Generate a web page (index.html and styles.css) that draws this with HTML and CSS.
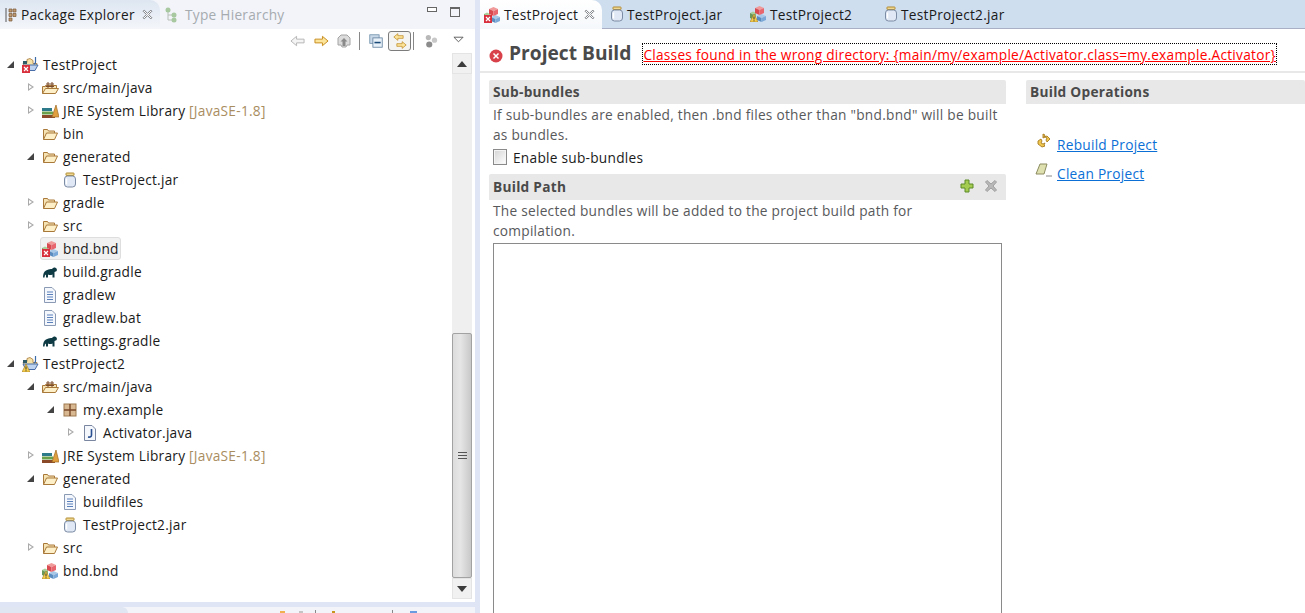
FILE: index.html
```html
<!DOCTYPE html>
<html lang="en">
<head>
<meta charset="utf-8">
<title>Project Build</title>
<link rel="stylesheet" href="styles.css">
</head>
<body>
<svg class="defs" aria-hidden="true">
<defs>
<symbol id="folder" viewBox="0 0 16 16">
<path d="M1.500 13.500V3.500h4l1 1.500h6v2.500" fill="#f6e3b4" stroke="#a9793a"/>
<path d="M1.500 13.500l3-6.500h11l-3 6.500z" fill="#fdf0c8" stroke="#a9793a" stroke-linejoin="round"/>
</symbol>
<symbol id="srcfolder" viewBox="0 0 18 16">
<path d="M1.500 13.500V6.500h3v-1h11v7" fill="#f6e3b4" stroke="#a9793a"/>
<path d="M1.500 13.500l3-5h13l-3 5z" fill="#fdf0c8" stroke="#a9793a" stroke-linejoin="round"/>
<path d="M7 2v6M11 2v6M5 4h8M5 6.500h8" stroke="#7a4a2a" fill="none"/>
</symbol>
<symbol id="project" viewBox="0 0 18 18">
<path d="M2 7.500l4-1v-3l3-1 3 2v3h4l-2 6H4z" fill="#f4e2a8" stroke="#a9793a" stroke-width=".8"/>
<path d="M2 5h4v3H2z" fill="#2e5b66"/>
<path d="M14.500 1v5q0 2-2 2" fill="none" stroke="#3a6aa8" stroke-width="1.200"/>
<path d="M2 9h15l-3 5.500H5z" fill="#bcd2ee" stroke="#4a6fa8"/>
</symbol>
<symbol id="errbadge" viewBox="0 0 8 8">
<rect width="8" height="8" fill="#d8303c"/>
<path d="M2 2l4 4M6 2L2 6" stroke="#fff" stroke-width="1.200"/>
</symbol>
<symbol id="warnbadge" viewBox="0 0 8 8">
<path d="M4 0l4 8H0z" fill="#f8cf4a" stroke="#a07a20" stroke-width=".6"/>
<path d="M4 2.500v3M4 6.300v1" stroke="#333"/>
</symbol>
<symbol id="jre" viewBox="0 0 18 16">
<path d="M1 5h10v3H1z" fill="#2d7a8a"/>
<path d="M1 8.500h11v3H1z" fill="#6aa04a"/>
<path d="M1 12h13v3H1z" fill="#8a4a2a"/>
<path d="M11 14l4-12 3 12z" fill="#e0a040" stroke="#a06a20" stroke-width=".7"/>
</symbol>
<symbol id="jar" viewBox="0 0 14 16">
<rect x="3" y="1" width="8" height="2.500" rx=".5" fill="#f0d890" stroke="#b08a30"/>
<rect x="1.500" y="4" width="11" height="11" rx="3" fill="#dfe8f4" stroke="#7c8ca4"/>
<path d="M3.500 6.500v6" stroke="#fff" stroke-width="1.500"/>
</symbol>
<symbol id="bnd" viewBox="0 0 18 18">
<path d="M1 8l3-1.500L7 8 4 9.500z" fill="#a8d098"/>
<path d="M1 8v5l3 1.500v-5z" fill="#6a9a5a"/>
<path d="M7 8v5l-3 1.500v-5z" fill="#88b878"/>
<path d="M8 11l4.500-2 4.500 2-4.500 2z" fill="#a8c8e8"/>
<path d="M8 11v4l4.500 2v-4z" fill="#5a8cc0"/>
<path d="M17 11v4l-4.500 2v-4z" fill="#7aa8d8"/>
<path d="M6 3l4.500-2L15 3l-4.500 2z" fill="#f09a9a"/>
<path d="M6 3v5l4.500 2V5z" fill="#d84a50"/>
<path d="M15 3v5l-4.500 2V5z" fill="#e8666e"/>
</symbol>
<symbol id="gradle" viewBox="0 0 14 12">
<path d="M0 11.500Q0 6 3 4.500 6 2.500 9 3q1-2 3-1.500 2 .5 2 2.500 0 1.500-2.500 2v5.500H9.500V8.500Q7 9.500 5 8.500v3H3V8.500Q1.500 9 1.500 11.500z" fill="#0e3a44"/>
</symbol>
<symbol id="file" viewBox="0 0 12 16">
<path d="M.5.5h7.500l3.500 3.500v11.500H.5z" fill="#f4f7fc" stroke="#8a9ab4"/>
<path d="M3 5h6M3 7.500h6M3 10h6M3 12.500h6" stroke="#5a80bc"/>
</symbol>
<symbol id="package" viewBox="0 0 14 14">
<rect x="1" y="1" width="12" height="12" fill="#d8b890" stroke="#a07a50"/>
<path d="M7 1v12M1 7h12" stroke="#7a4a2a" stroke-width="1.400"/>
</symbol>
<symbol id="java" viewBox="0 0 12 16">
<path d="M.5.5h7.500l3.500 3.500v11.500H.5z" fill="#f4f7fc" stroke="#7a86a0"/>
<path d="M7.500 4v6q0 2.500-3.500 2" fill="none" stroke="#2a4f90" stroke-width="1.600"/>
</symbol>
<symbol id="close" viewBox="0 0 10 10">
<path d="M1 2l1-1 3 3 3-3 1 1-3 3 3 3-1 1-3-3-3 3-1-1 3-3z" fill="#fff" stroke="#7b7f85" stroke-width=".9"/>
</symbol>
<symbol id="hier" viewBox="0 0 14 16">
<path d="M4 3v10M4 8h5M4 13h5" stroke="#b8c0b8" fill="none"/>
<circle cx="4" cy="3" r="2.500" fill="#a8c8a0"/>
<circle cx="10" cy="8" r="2.500" fill="#a8c8a0"/>
<circle cx="10" cy="13" r="2.500" fill="#a8c8a0"/>
</symbol>
<symbol id="pkgview" viewBox="0 0 14 16">
<path d="M2 1v14" stroke="#555"/>
<path d="M5 2h3v3H5zM9 2h3v3H9zM5 6.500h3v3H5zM9 6.500h3v3H9zM5 11h3v3H5z" fill="#c09a70" stroke="#7a5a3a" stroke-width=".7"/>
</symbol>
<symbol id="arrow" viewBox="0 0 16 12">
<path d="M1 4h8V1l6 5-6 5V8H1z" stroke-linejoin="round"/>
</symbol>
</defs>
</svg>

<div class="workbench">
  <section class="left-pane">
    <header class="view-tabs">
      <div class="view-tab active">
        <svg class="ic14"><use href="#pkgview"/></svg>
        <span>Package Explorer</span>
        <svg class="x"><use href="#close"/></svg>
      </div>
      <div class="view-tab second">
        <svg class="ic14"><use href="#hier"/></svg>
        <span class="dim">Type Hierarchy</span>
      </div>
      <div class="win-ctl">
        <span class="min"></span>
        <span class="max"></span>
      </div>
    </header>
    <div class="toolbar">
      <svg class="tb-arrow back"><use href="#arrow"/></svg>
      <svg class="tb-arrow fwd"><use href="#arrow"/></svg>
      <svg class="tb-icon home" viewBox="0 0 16 16"><path d="M2 12V5l3-3h6l3 3v7h-3l-1 2H6l-1-2z" fill="#dcdcdc" stroke="#a4a4a4"/><path d="M8 5l3.500 3.500H9.500V13h-3V8.500h-2z" fill="#8a8a8a"/></svg>
      <i class="sep"></i>
      <svg class="tb-icon collapse" viewBox="0 0 18 18"><rect x="1" y="1" width="12" height="11" fill="#c8d8e8" stroke="#6a8aa8"/><rect x="5" y="5" width="12" height="12" fill="#e8f0f8" stroke="#5a7a98"/><path d="M7 11h8" stroke="#1a4a78" stroke-width="2"/></svg>
      <span class="toggle">
        <svg class="link-up"><use href="#arrow"/></svg>
        <svg class="link-dn"><use href="#arrow"/></svg>
      </span>
      <i class="sep"></i>
      <svg class="tb-icon focus" viewBox="0 0 16 16"><circle cx="5" cy="4" r="3" fill="#b8b8b8"/><circle cx="12" cy="7" r="3" fill="#c8c8c8"/><circle cx="6" cy="12" r="3.500" fill="#8c8c8c"/></svg>
      <svg class="tb-menu" viewBox="0 0 12 7"><path d="M1 1h10L6 6z" fill="#fff" stroke="#555"/></svg>
    </div>
    <div class="tree-wrap">
      <ul class="tree">
        <li class="row l0"><i class="tw open"></i><span class="ico"><svg class="i18"><use href="#project"/></svg><svg class="bd"><use href="#errbadge"/></svg></span><span>TestProject</span></li>
        <li class="row l1"><i class="tw shut"></i><span class="ico"><svg class="i18"><use href="#srcfolder"/></svg></span><span>src/main/java</span></li>
        <li class="row l1"><i class="tw shut"></i><span class="ico"><svg class="i18"><use href="#jre"/></svg></span><span>JRE System Library <em>[JavaSE-1.8]</em></span></li>
        <li class="row l1"><i class="tw"></i><span class="ico"><svg class="i16"><use href="#folder"/></svg></span><span>bin</span></li>
        <li class="row l1"><i class="tw open"></i><span class="ico"><svg class="i16"><use href="#folder"/></svg></span><span>generated</span></li>
        <li class="row l2"><i class="tw"></i><span class="ico"><svg class="i16"><use href="#jar"/></svg></span><span>TestProject.jar</span></li>
        <li class="row l1"><i class="tw shut"></i><span class="ico"><svg class="i16"><use href="#folder"/></svg></span><span>gradle</span></li>
        <li class="row l1"><i class="tw shut"></i><span class="ico"><svg class="i16"><use href="#folder"/></svg></span><span>src</span></li>
        <li class="row l1"><i class="tw"></i><span class="ico"><svg class="i18"><use href="#bnd"/></svg><svg class="bd"><use href="#errbadge"/></svg></span><span class="sel">bnd.bnd</span></li>
        <li class="row l1"><i class="tw"></i><span class="ico"><svg class="gr"><use href="#gradle"/></svg></span><span>build.gradle</span></li>
        <li class="row l1"><i class="tw"></i><span class="ico"><svg class="i16"><use href="#file"/></svg></span><span>gradlew</span></li>
        <li class="row l1"><i class="tw"></i><span class="ico"><svg class="i16"><use href="#file"/></svg></span><span>gradlew.bat</span></li>
        <li class="row l1"><i class="tw"></i><span class="ico"><svg class="gr"><use href="#gradle"/></svg></span><span>settings.gradle</span></li>
        <li class="row l0"><i class="tw open"></i><span class="ico"><svg class="i18"><use href="#project"/></svg><svg class="bd"><use href="#warnbadge"/></svg></span><span>TestProject2</span></li>
        <li class="row l1"><i class="tw open"></i><span class="ico"><svg class="i18"><use href="#srcfolder"/></svg></span><span>src/main/java</span></li>
        <li class="row l2"><i class="tw open"></i><span class="ico"><svg class="i14"><use href="#package"/></svg></span><span>my.example</span></li>
        <li class="row l3"><i class="tw shut"></i><span class="ico"><svg class="i16"><use href="#java"/></svg></span><span>Activator.java</span></li>
        <li class="row l1"><i class="tw shut"></i><span class="ico"><svg class="i18"><use href="#jre"/></svg></span><span>JRE System Library <em>[JavaSE-1.8]</em></span></li>
        <li class="row l1"><i class="tw open"></i><span class="ico"><svg class="i16"><use href="#folder"/></svg></span><span>generated</span></li>
        <li class="row l2"><i class="tw"></i><span class="ico"><svg class="i16"><use href="#file"/></svg></span><span>buildfiles</span></li>
        <li class="row l2"><i class="tw"></i><span class="ico"><svg class="i16"><use href="#jar"/></svg></span><span>TestProject2.jar</span></li>
        <li class="row l1"><i class="tw shut"></i><span class="ico"><svg class="i16"><use href="#folder"/></svg></span><span>src</span></li>
        <li class="row l1"><i class="tw"></i><span class="ico"><svg class="i18"><use href="#bnd"/></svg><svg class="bd"><use href="#warnbadge"/></svg></span><span>bnd.bnd</span></li>
      </ul>
      <div class="scrollbar">
        <span class="sb-btn"><i class="up"></i></span>
        <span class="sb-space"></span>
        <span class="sb-thumb"><i></i></span>
        <span class="sb-btn"><i class="down"></i></span>
      </div>
    </div>
    <div class="gutter-h"></div>
    <div class="lower-tabs">
      <span class="lower-tab"></span>
      <i class="bit orange"></i>
      <i class="bit gray"></i>
      <i class="bit line"></i>
      <i class="bit orange2"></i>
      <i class="bit line2"></i>
      <i class="bit blue"></i>
    </div>
  </section>

  <main class="editor">
    <nav class="ed-tabs">
      <div class="ed-tab active">
        <span class="ico"><svg class="i18"><use href="#bnd"/></svg><svg class="bd"><use href="#errbadge"/></svg></span>
        <span>TestProject</span>
        <svg class="x"><use href="#close"/></svg>
      </div>
      <div class="ed-tab t2"><svg class="i16"><use href="#jar"/></svg><span>TestProject.jar</span></div>
      <div class="ed-tab t3"><span class="ico"><svg class="i18"><use href="#bnd"/></svg><svg class="bd"><use href="#warnbadge"/></svg></span><span>TestProject2</span></div>
      <div class="ed-tab t4"><svg class="i16"><use href="#jar"/></svg><span>TestProject2.jar</span></div>
    </nav>
    <div class="form-head">
      <svg class="err" viewBox="0 0 14 14"><circle cx="7" cy="7" r="6.500" fill="#d8404a"/><path d="M4.500 4.500l5 5M9.500 4.500l-5 5" stroke="#fff" stroke-width="1.500"/></svg>
      <h1>Project Build</h1>
      <a class="err-link" href="#">Classes found in the wrong directory: {main/my/example/Activator.class=my.example.Activator}</a>
    </div>
    <div class="form-body">
      <div class="col-main">
        <h2 class="sec-head s1">Sub-bundles</h2>
        <p class="desc">If sub-bundles are enabled, then .bnd files other than "bnd.bnd" will be built as bundles.</p>
        <label class="check"><span class="box"></span><span class="check-text">Enable sub-bundles</span></label>
        <h2 class="sec-head s2">Build Path
          <span class="sec-tools">
            <svg class="i14" viewBox="0 0 14 14"><path d="M5 1h4v4h4v4H9v4H5V9H1V5h4z" fill="#a4cc50" stroke="#5c8a28"/></svg>
            <svg class="i14" viewBox="0 0 14 14"><path d="M1.500 3L3 1.500 7 5l4-3.500L12.500 3 9 7l3.500 4-1.500 1.500L7 9l-4 3.500L1.500 11 5 7z" fill="#b8b8b8" stroke="#a0a0a0"/></svg>
          </span>
        </h2>
        <p class="desc">The selected bundles will be added to the project build path for compilation.</p>
        <div class="list-box"></div>
      </div>
      <aside class="col-side">
        <h2 class="sec-head s1">Build Operations</h2>
        <div class="ops">
          <div class="op">
            <svg class="op-ic" viewBox="0 0 16 16"><path d="M7 1l2 1-1 2 3-1 3 3-3 3-1-2 1-2-2-1-2 1zM2 8l3-2 1 2-1 2 2 1 2-1-1 2 1 1-3 1-4-3z" fill="#f0c850" stroke="#a87c20" stroke-width=".9"/></svg>
            <a href="#">Rebuild Project</a>
          </div>
          <div class="op">
            <svg class="op-ic" viewBox="0 0 18 16"><path d="M1 12L5 2h7l-3 10z" fill="#dfe0b0" stroke="#8c8c60"/><path d="M11 14h6" stroke="#888"/></svg>
            <a href="#">Clean Project</a>
          </div>
        </div>
      </aside>
    </div>
  </main>
</div>
</body>
</html>
```

FILE: styles.css
```css
* { box-sizing: border-box; }
html, body { margin: 0; height: 613px; overflow: hidden; }
body {
  background: #fff;
  color: #1a1a1a;
  font-family: "Open Sans", "Noto Sans", sans-serif;
  font-size: 13.7px;
  letter-spacing: .26px;
}
.defs { width: 0; height: 0; display: block; }
.workbench { display: flex; height: 613px; }

/* left pane */
.left-pane { width: 480px; flex: none; display: flex; flex-direction: column; border-right: 5px solid #dfe5f4; }
.view-tabs { height: 29px; display: flex; align-items: center; background: #f2f4fa; flex: none; }
.view-tab { height: 29px; display: flex; align-items: center; gap: 3px; padding-left: 4px; }
.view-tab.active { width: 160px; background: linear-gradient(#dde6f1, #f4f6fa); border-top-right-radius: 10px; }
.view-tab.second { gap: 7px; }
.view-tab .x { margin-left: 4px; }
.x { width: 11px; height: 11px; flex: none; }
.ic14 { width: 14px; height: 16px; flex: none; }
.dim { color: #a6abb0; }
.win-ctl { margin-left: auto; display: flex; align-items: center; gap: 13px; padding-right: 15px; }
.min { width: 10px; height: 5px; border: 1px solid #666; background: #fff; margin-top: -11px; }
.max { width: 10px; height: 10px; border: 1px solid #666; border-top-width: 2px; margin-top: -5px; }

.toolbar { height: 24px; flex: none; display: flex; align-items: center; padding-left: 290px; }
.toolbar svg { flex: none; }
.tb-arrow { width: 15px; height: 12px; }
.back { transform: scaleX(-1); fill: #f4f4f4; stroke: #b4b4b4; }
.fwd { margin-left: 9px; fill: #fce59a; stroke: #c58a1c; }
.tb-icon { width: 14px; height: 14px; margin-left: 6px; }
.home { width: 16px; height: 16px; margin-left: 7px; }
.sep { width: 1px; height: 18px; background: #888; margin-left: 7px; flex: none; }
.collapse { margin-left: 9px; width: 14px; height: 14px; }
.toggle { width: 23px; height: 20px; margin-left: 5px; border: 1px solid #7c7c7c; border-radius: 3px; background: #f4f4f2; display: flex; flex-direction: column; align-items: center; justify-content: center; flex: none; }
.toggle svg { width: 15px; height: 8px; fill: #fce59a; stroke: #b98014; }
.link-up { transform: scaleX(-1); margin-left: -2px; }
.link-dn { margin-left: 3px; }
.sep + .focus { margin-left: 10px; }
.toggle + .sep { margin-left: 2px; }
.tb-menu { width: 11px; height: 7px; margin-left: 15px; margin-top: -4px; }

.tree-wrap { height: 549px; flex: none; display: flex; }
.tree { list-style: none; margin: 0; padding: 0; flex: 1; min-width: 0; }
.row { height: 23px; display: flex; align-items: center; white-space: nowrap; }
.row em { font-style: normal; color: #a98d5f; }
.l0 { padding-left: 7px; }
.l1 { padding-left: 27px; }
.l2 { padding-left: 47px; }
.l3 { padding-left: 67px; }
.tw { width: 9px; height: 9px; flex: none; position: relative; }
.tw.open::before { content: ""; display: block; width: 0; height: 0; border-bottom: 7px solid #444; border-left: 7px solid transparent; margin-top: 1px; }
.tw.shut::before { content: ""; display: block; width: 0; height: 0; border-top: 4px solid transparent; border-bottom: 4px solid transparent; border-left: 6px solid #aaa; margin-left: 1px; }
.tw.shut::after { content: ""; position: absolute; left: 2px; top: 2px; border-top: 2.500px solid transparent; border-bottom: 2.500px solid transparent; border-left: 3.500px solid #fff; }
.ico { width: 18px; height: 18px; margin-left: 5px; margin-right: 4px; position: relative; display: flex; align-items: center; justify-content: center; flex: none; }
.i18 { width: 18px; height: 18px; flex: none; }
.i16 { width: 16px; height: 16px; flex: none; }
.i14 { width: 14px; height: 14px; flex: none; }
.gr { width: 14px; height: 12px; flex: none; }
.bd { position: absolute; left: 1px; bottom: 1px; width: 8px; height: 8px; }
.sel { background: #f1f1f1; border: 1px solid #dedede; border-radius: 3px; margin-left: -23px; padding-left: 22px; padding-right: 1px; line-height: 21px; }
.scrollbar { width: 20px; margin-right: 3px; background: #efefef; display: flex; flex-direction: column; flex: none; height: 546px; }
.sb-btn { height: 21px; flex: none; display: flex; align-items: center; justify-content: center; background: #f1f1f1; border: 1px solid #e4e4e4; }
.sb-btn i { width: 0; height: 0; border-left: 5px solid transparent; border-right: 5px solid transparent; }
.up { border-bottom: 6px solid #3c3c3c; }
.down { border-top: 6px solid #3c3c3c; }
.sb-space { flex: 1; }
.sb-thumb { height: 245px; flex: none; border: 1px solid #a2a2a2; border-radius: 2px; background: linear-gradient(90deg, #dcdcdc, #e6e6e6 40%, #c8c8c8); display: flex; align-items: center; justify-content: center; }
.sb-thumb i { width: 9px; height: 7px; border-top: 1px solid #555; border-bottom: 1px solid #555; background: linear-gradient(#0000 2px, #555 2px, #555 3px, #0000 3px); }
.gutter-h { height: 5px; background: #dfe5f4; flex: none; }
.lower-tabs { flex: 1; background: #f2f4fa; min-height: 0; display: flex; align-items: flex-end; }
.lower-tab { width: 128px; height: 6px; background: #e0e7f2; border-top-right-radius: 8px; align-self: flex-start; }
.bit { height: 2px; flex: none; }
.orange { width: 5px; margin-left: 152px; background: #f0b050; }
.gray { width: 4px; margin-left: 14px; background: #c4c4c4; }
.line { width: 1px; height: 3px; margin-left: 12px; background: #888; }
.orange2 { width: 3px; margin-left: 16px; background: #c8961c; }
.line2 { width: 1px; height: 3px; margin-left: 57px; background: #888; }
.blue { width: 7px; margin-left: 17px; background: #6a9ae0; }

/* editor */
.editor { flex: 1; min-width: 0; display: flex; flex-direction: column; }
.ed-tabs { height: 29px; flex: none; display: flex; background: #cfdeef; border-bottom: 1px solid #a9b0c6; }
.ed-tab { display: flex; align-items: center; height: 28px; flex: none; }
.ed-tab .ico { margin-left: 3px; margin-right: 3px; }
.ed-tab.active { width: 122px; background: linear-gradient(#fff, #f5f8fb); border-top-right-radius: 10px; height: 29px; }
.ed-tab.active .x { margin-left: 6px; }
.t2 { margin-left: 7px; width: 140px; gap: 2px; }
.ed-tab.t3 { width: 134px; }
.ed-tab.t3 .ico { margin-left: 0; }
.t4 { gap: 2px; }
.form-head { height: 44px; flex: none; display: flex; align-items: center; padding: 4px 0 0 9px; border-bottom: 2px solid #e8e8e8; }
.err { width: 14px; height: 14px; flex: none; margin-top: 8px; }
h1 { font-size: 19.2px; letter-spacing: 0; font-weight: 700; color: #4a4a4a; margin: 2px 0 0 6px; line-height: 24px; }
.err-link { color: #f00; margin: 4px 0 0 11px; border: 1px dotted #000; height: 22px; line-height: 21px; white-space: nowrap; width: 635px; }

.form-body { flex: 1; display: flex; padding: 7px 0 0 9px; min-height: 0; }
.col-main { width: 517px; flex: none; display: flex; flex-direction: column; }
.col-side { flex: 1; margin-left: 20px; min-width: 0; }
.sec-head { margin: 0; background: #e8e8e8; color: #4a4a4a; font-size: 13.7px; font-weight: 700; padding: 0 0 2px 4px; display: flex; align-items: center; border-radius: 2px 2px 0 0; }
.s1 { height: 24px; }
.s2 { height: 26px; margin-top: 6px; }
.sec-tools { margin-left: auto; display: flex; gap: 10px; padding-right: 8px; }
.desc { margin: 0; padding: 1px 8px 0 4px; line-height: 20px; color: #58595b; }
.check { display: flex; align-items: center; gap: 6px; height: 23px; padding-left: 4px; color: #1a1a1a; }
.check-text { margin-top: 2px; }
.box { width: 14px; height: 16px; border: 1px solid #8a8a8a; background: linear-gradient(135deg, #d4d4d4, #fff); box-shadow: inset 0 0 0 1px #f4f4f4; }
.list-box { flex: 1; margin: 2px 4px 0 4px; border: 1px solid #8a8a8a; border-bottom: 0; }
.ops { padding: 29px 0 0 9px; display: flex; flex-direction: column; gap: 6px; }
.op { display: flex; align-items: center; height: 23px; gap: 4px; }
.op a { color: #0b6fd6; }
.op-ic { width: 18px; height: 16px; margin-top: -7px; flex: none; }
```
